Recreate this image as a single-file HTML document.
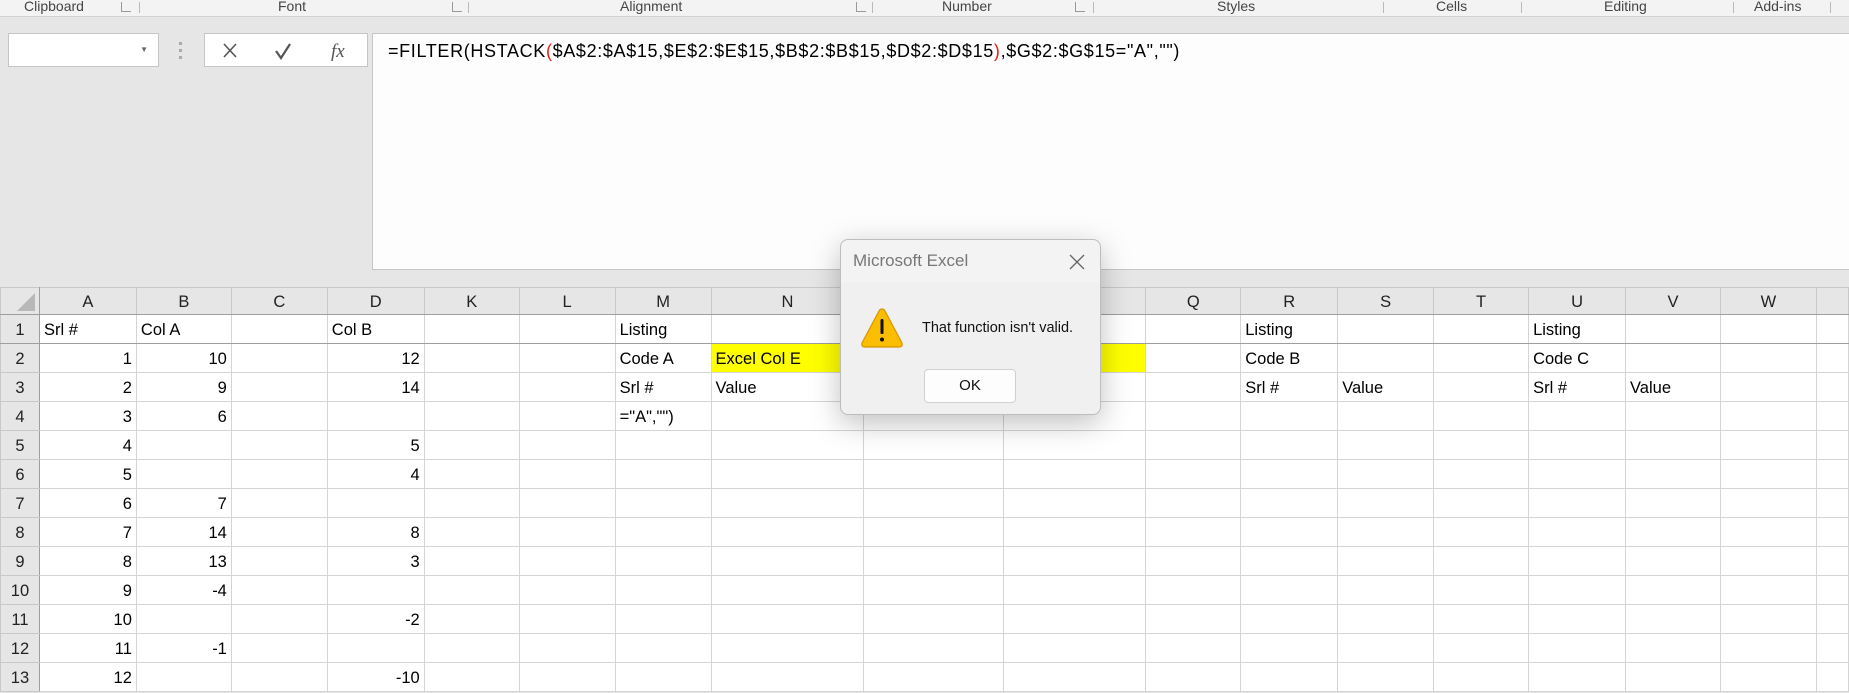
<!DOCTYPE html>
<html><head><meta charset="utf-8"><style>
*{margin:0;padding:0;box-sizing:border-box}
body{width:1849px;height:693px;overflow:hidden;background:#e6e6e6;font-family:"Liberation Sans",sans-serif;position:relative}
.a{position:absolute}
.rib{left:0;top:0;width:1849px;height:17px;background:#f3f3f3;border-bottom:1px solid #d2d2d2;font-size:14px;color:#444;line-height:12px;overflow:hidden}
.rib span{position:absolute;top:0}
.sep{position:absolute;top:2px;width:1px;height:11px;background:#bbb}
.dl{position:absolute;top:2px;width:10px;height:10px;border:1px solid #999;border-top:none;border-right:none}
table{position:absolute;left:0;top:287px;border-collapse:collapse;table-layout:fixed;font-size:16.5px;color:#000}
td{height:29px;border:1px solid #d4d4d4;background:#fff;padding:0 4px;white-space:nowrap;overflow:hidden;vertical-align:bottom;padding-bottom:3px}
tr.h td{height:27px;background:#e6e6e6;text-align:center;border-color:#c8c8c8;border-bottom:1px solid #9e9e9e;color:#222;padding-bottom:2px}
td.rh{background:#e6e6e6;text-align:center;border-color:#c8c8c8;border-right:1px solid #9e9e9e;color:#222;padding:0 0 3px 0}
td.r{text-align:right}
td.y{background:#ffff00}
tr.f td{border-bottom:1px solid #9e9e9e}
</style></head><body>
<div class="a rib">
<span style="left:24px">Clipboard</span><div class="dl" style="left:121px"></div><div class="sep" style="left:139px"></div>
<span style="left:278px">Font</span><div class="dl" style="left:452px"></div><div class="sep" style="left:468px"></div>
<span style="left:620px">Alignment</span><div class="dl" style="left:856px"></div><div class="sep" style="left:872px"></div>
<span style="left:942px">Number</span><div class="dl" style="left:1075px"></div><div class="sep" style="left:1093px"></div>
<span style="left:1217px">Styles</span><div class="sep" style="left:1383px"></div>
<span style="left:1436px">Cells</span><div class="sep" style="left:1521px"></div>
<span style="left:1604px">Editing</span><div class="sep" style="left:1733px"></div>
<span style="left:1754px">Add-ins</span><div class="sep" style="left:1830px"></div>
</div>
<div class="a" style="left:8px;top:33px;width:151px;height:34px;background:#fff;border:1px solid #c6c6c6"><span class="a" style="right:10px;top:11px;font-size:8px;color:#666">▼</span></div>
<div class="a" style="left:179px;top:42px;width:3px;height:3px;background:#aaa"></div>
<div class="a" style="left:179px;top:49px;width:3px;height:3px;background:#aaa"></div>
<div class="a" style="left:179px;top:56px;width:3px;height:3px;background:#aaa"></div>
<div class="a" style="left:204px;top:33px;width:164px;height:34px;background:#fff;border:1px solid #c6c6c6">
<svg width="164" height="34" style="position:absolute;left:0;top:0"><path d="M19 10 L31 23 M31 10 L19 23" stroke="#555" stroke-width="1.6" fill="none"/><path d="M71 17 L76 24 L85 10" stroke="#555" stroke-width="2.2" fill="none"/><text x="126" y="23" font-family="Liberation Serif" font-style="italic" font-size="19" fill="#555">fx</text></svg></div>
<div class="a" style="left:372px;top:33px;width:1477px;height:237px;background:#fdfdfd;border:1px solid #c6c6c6;border-right:none"><div class="a" style="left:15px;top:7px;font-size:18px;letter-spacing:0.65px;color:#000;white-space:nowrap">=FILTER(HSTACK<span style="color:#e0201b">(</span>$A$2:$A$15,$E$2:$E$15,$B$2:$B$15,$D$2:$D$15<span style="color:#e0201b">)</span>,$G$2:$G$15="A","")</div></div>
<table>
<colgroup><col style="width:39px"><col style="width:97px"><col style="width:95px"><col style="width:96px"><col style="width:97px"><col style="width:95px"><col style="width:96px"><col style="width:96px"><col style="width:153px"><col style="width:140px"><col style="width:142px"><col style="width:95px"><col style="width:97px"><col style="width:96px"><col style="width:95px"><col style="width:97px"><col style="width:95px"><col style="width:96px"><col style="width:32px"></colgroup>
<tr class="h"><td style="border-right:1px solid #9e9e9e;background:#e6e6e6"></td><td>A</td><td>B</td><td>C</td><td>D</td><td>K</td><td>L</td><td>M</td><td>N</td><td>O</td><td>P</td><td>Q</td><td>R</td><td>S</td><td>T</td><td>U</td><td>V</td><td>W</td><td></td></tr>
<tr class="f"><td class="rh">1</td><td>Srl #</td><td>Col A</td><td></td><td>Col B</td><td></td><td></td><td>Listing</td><td></td><td></td><td></td><td></td><td>Listing</td><td></td><td></td><td>Listing</td><td></td><td></td><td></td></tr>
<tr><td class="rh">2</td><td class="r">1</td><td class="r">10</td><td></td><td class="r">12</td><td></td><td></td><td>Code A</td><td class="y">Excel Col E</td><td class="y"></td><td class="y">Excel Col D</td><td></td><td>Code B</td><td></td><td></td><td>Code C</td><td></td><td></td><td></td></tr>
<tr><td class="rh">3</td><td class="r">2</td><td class="r">9</td><td></td><td class="r">14</td><td></td><td></td><td>Srl #</td><td>Value</td><td></td><td></td><td></td><td>Srl #</td><td>Value</td><td></td><td>Srl #</td><td>Value</td><td></td><td></td></tr>
<tr><td class="rh">4</td><td class="r">3</td><td class="r">6</td><td></td><td></td><td></td><td></td><td>="A","")</td><td></td><td></td><td></td><td></td><td></td><td></td><td></td><td></td><td></td><td></td><td></td></tr>
<tr><td class="rh">5</td><td class="r">4</td><td></td><td></td><td class="r">5</td><td></td><td></td><td></td><td></td><td></td><td></td><td></td><td></td><td></td><td></td><td></td><td></td><td></td><td></td></tr>
<tr><td class="rh">6</td><td class="r">5</td><td></td><td></td><td class="r">4</td><td></td><td></td><td></td><td></td><td></td><td></td><td></td><td></td><td></td><td></td><td></td><td></td><td></td><td></td></tr>
<tr><td class="rh">7</td><td class="r">6</td><td class="r">7</td><td></td><td></td><td></td><td></td><td></td><td></td><td></td><td></td><td></td><td></td><td></td><td></td><td></td><td></td><td></td><td></td></tr>
<tr><td class="rh">8</td><td class="r">7</td><td class="r">14</td><td></td><td class="r">8</td><td></td><td></td><td></td><td></td><td></td><td></td><td></td><td></td><td></td><td></td><td></td><td></td><td></td><td></td></tr>
<tr><td class="rh">9</td><td class="r">8</td><td class="r">13</td><td></td><td class="r">3</td><td></td><td></td><td></td><td></td><td></td><td></td><td></td><td></td><td></td><td></td><td></td><td></td><td></td><td></td></tr>
<tr><td class="rh">10</td><td class="r">9</td><td class="r">-4</td><td></td><td></td><td></td><td></td><td></td><td></td><td></td><td></td><td></td><td></td><td></td><td></td><td></td><td></td><td></td><td></td></tr>
<tr><td class="rh">11</td><td class="r">10</td><td></td><td></td><td class="r">-2</td><td></td><td></td><td></td><td></td><td></td><td></td><td></td><td></td><td></td><td></td><td></td><td></td><td></td><td></td></tr>
<tr><td class="rh">12</td><td class="r">11</td><td class="r">-1</td><td></td><td></td><td></td><td></td><td></td><td></td><td></td><td></td><td></td><td></td><td></td><td></td><td></td><td></td><td></td><td></td></tr>
<tr><td class="rh">13</td><td class="r">12</td><td></td><td></td><td class="r">-10</td><td></td><td></td><td></td><td></td><td></td><td></td><td></td><td></td><td></td><td></td><td></td><td></td><td></td><td></td></tr>
</table>
<svg class="a" style="left:15px;top:291px" width="22" height="22"><path d="M2 20 L20 2 L20 20 Z" fill="#b8b8b8"/></svg>
<div class="a" style="left:840px;top:239px;width:261px;height:176px;background:#f0f0f0;border:1px solid #bdbdbd;border-radius:8px;box-shadow:0 8px 30px rgba(0,0,0,.25)">
<div class="a" style="left:0;top:0;width:259px;height:43px;background:#f3f3f3;border-radius:8px 8px 0 0"></div>
<div class="a" style="left:12px;top:11px;font-size:17px;color:#777">Microsoft Excel</div>
<svg class="a" style="left:228px;top:14px" width="16" height="16"><path d="M1 1 L15 15 M15 1 L1 15" stroke="#666" stroke-width="1.3"/></svg>
<svg class="a" style="left:19px;top:67px" width="44" height="42"><path d="M22 2 Q24 2 25 4 L42 36 Q43 40 39 40 L5 40 Q1 40 2 36 L19 4 Q20 2 22 2 Z" fill="#fbbd00" stroke="#d99400" stroke-width="1.2"/><rect x="20.5" y="12" width="3" height="15" rx="1.3" fill="#111"/><circle cx="22" cy="32.5" r="2" fill="#111"/></svg>
<div class="a" style="left:81px;top:80px;font-size:14.5px;color:#111">That function isn't valid.</div>
<div class="a" style="left:83px;top:129px;width:92px;height:34px;background:#fdfdfd;border:1px solid #d0d0d0;border-radius:4px;text-align:center;line-height:32px;font-size:15px;color:#111">OK</div>
</div>
</body></html>
